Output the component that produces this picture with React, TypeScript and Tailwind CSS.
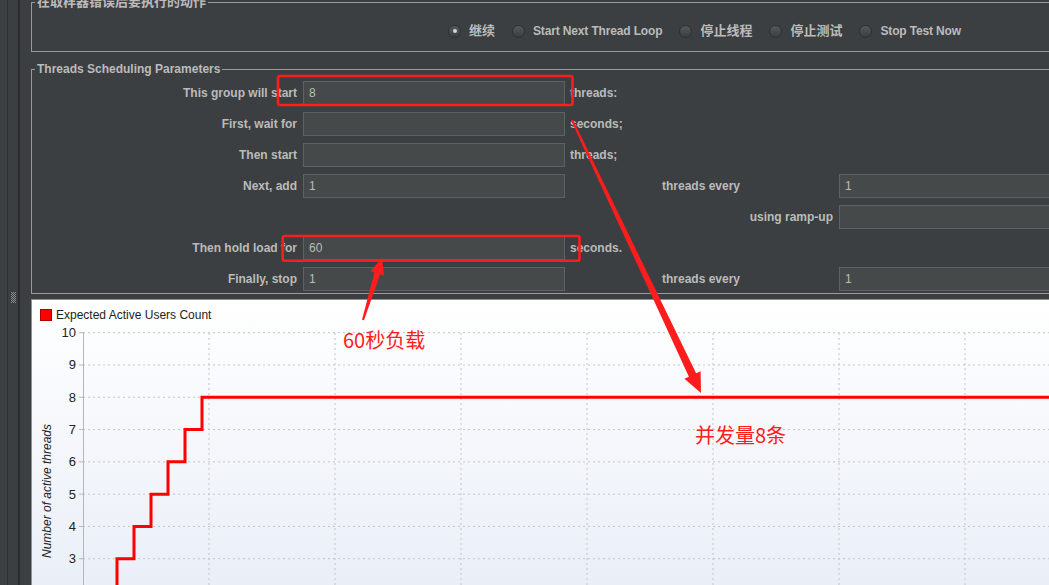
import React from 'react';

// JMeter stepping thread group panel (Darcula look) with red annotations on top

const labelCls = "font-['Liberation_Sans','Noto_Sans_CJK_SC',sans-serif] text-[12px] font-bold text-[#bbbbbb] whitespace-nowrap";

function Field({ value, width }: { value?: string; width: string }) {
    return (
        <div
            className={`${width} h-[24px] shrink-0 border border-[#5e6162] bg-[#45494a] pl-[5px] flex items-center text-[12px] text-[#bbbbbb] font-['Liberation_Sans',sans-serif]`}
        >
            {value}
        </div>
    );
}

function Radio({ label, checked, cjk }: { label: string; checked?: boolean; cjk?: boolean }) {
    return (
        <div className="flex items-center gap-[8px]">
            <span className="w-[13px] h-[13px] rounded-full border border-[#2d2f31] bg-gradient-to-b from-[#56595b] to-[#3b3e40] flex items-center justify-center">
                {checked && <span className="w-[4px] h-[4px] rounded-full bg-[#d6d6d6]" />}
            </span>
            <span
                className={`font-['Liberation_Sans','Noto_Sans_CJK_SC',sans-serif] font-bold text-[#bbbbbb] whitespace-nowrap ${
                    cjk ? 'text-[13px]' : 'text-[12px] tracking-[-0.15px]'
                }`}
            >
                {label}
            </span>
        </div>
    );
}

interface Row {
    label?: string;
    value?: string;
    hasField: boolean;
    unit?: string;
    midLabel?: string;
    midRight?: boolean;
    right?: string;
    hasRight?: boolean;
}

const rows: Row[] = [
    { label: 'This group will start', value: '8', hasField: true, unit: 'threads:' },
    { label: 'First, wait for', hasField: true, unit: 'seconds;' },
    { label: 'Then start', hasField: true, unit: 'threads;' },
    { label: 'Next, add', value: '1', hasField: true, midLabel: 'threads every', hasRight: true, right: '1' },
    { hasField: false, midLabel: 'using ramp-up', midRight: true, hasRight: true },
    { label: 'Then hold load for', value: '60', hasField: true, unit: 'seconds.' },
    { label: 'Finally, stop', value: '1', hasField: true, midLabel: 'threads every', hasRight: true, right: '1' },
];

const yv = (v: number) => 332.7 + (10 - v) * 32.29;
const gridXs = [209, 335, 461, 587, 713, 839, 965];
const gridVals = [10, 9, 8, 7, 6, 5, 4, 3, 2];

function Chart() {
    const step = `M117,600 V${yv(3)} H134 V${yv(4)} H151 V${yv(5)} H168 V${yv(6)} H185 V${yv(7)} H202 V${yv(8)} H1060`;
    return (
        <div className="ml-[11px] mt-[5px] w-[1040px] h-[300px] shrink-0 border-l border-t border-[#8e9092] bg-gradient-to-b from-white to-[#e9eef7]">
            <div className="flex items-center pl-[8px] pt-[9px] h-[21px]">
                <span className="w-[12px] h-[12px] bg-[#ff0000] border border-[#b00000]" />
                <span className="ml-[4px] text-[12px] text-[#222222] font-['Liberation_Sans',sans-serif] leading-[12px]">
                    Expected Active Users Count
                </span>
            </div>
            <svg width={1017} height={262} viewBox="32 323 1017 262" className="mt-[2px] block">
                {gridVals.map((v) => (
                    <g key={v}>
                        <line x1={83} x2={1049} y1={yv(v)} y2={yv(v)} stroke="#c4c4c8" strokeDasharray="2 3" />
                        <line x1={79} x2={83} y1={yv(v)} y2={yv(v)} stroke="#b8b8b8" />
                        {v > 2 && (
                            <text
                                x={76}
                                y={yv(v) + 4.5}
                                textAnchor="end"
                                fontSize={13}
                                fill="#222"
                                fontFamily="Liberation Sans, sans-serif"
                            >
                                {v}
                            </text>
                        )}
                    </g>
                ))}
                {gridXs.map((x) => (
                    <line key={x} x1={x} x2={x} y1={333} y2={600} stroke="#c4c4c8" strokeDasharray="2 3" />
                ))}
                <line x1={83.5} x2={83.5} y1={332} y2={600} stroke="#b4b6ba" />
                <text
                    x={0}
                    y={0}
                    transform="translate(51 491) rotate(-90)"
                    textAnchor="middle"
                    fontSize={12}
                    fontStyle="italic"
                    fill="#222"
                    fontFamily="Liberation Sans, sans-serif"
                >
                    Number of active threads
                </text>
                <path d={step} fill="none" stroke="#ff0000" strokeWidth={3} />
            </svg>
        </div>
    );
}

function Annotations() {
    return (
        <>
            <svg className="absolute inset-0 pointer-events-none" width={1049} height={585} viewBox="0 0 1049 585">
                <rect x={278} y={76} width={294.5} height={29} rx={2} fill="none" stroke="#ff1c1c" strokeWidth={2.6} />
                <rect x={282.7} y={236} width={296.8} height={24.7} rx={2} fill="none" stroke="#ff1c1c" strokeWidth={2.6} />
                {/* arrow to the 8-thread plateau */}
                <polygon
                    points="571.1,120.4 688.9,376.7 684.4,378.8 701,393 700.6,371.2 696.1,373.3 572.9,119.6"
                    fill="#ff1c1c"
                />
                {/* arrow to the hold field */}
                <polygon
                    points="362.0,319.7 374.4,272.4 370.6,271.2 382,258 384,275.4 380.2,274.2 364.0,320.3"
                    fill="#ff1c1c"
                />
            </svg>
            <span className="absolute left-[343px] top-[327px] text-[20px] leading-[26px] text-[#ff1c1c] font-['Noto_Sans_CJK_SC',sans-serif] pointer-events-none">
                60秒负载
            </span>
            <span className="absolute left-[695px] top-[422px] text-[20px] leading-[26px] text-[#ff1c1c] font-['Noto_Sans_CJK_SC',sans-serif] pointer-events-none">
                并发量8条
            </span>
        </>
    );
}

export default function App() {
    return (
        <div className="relative w-[1049px] h-[585px] overflow-hidden bg-[#3c3f41] flex">
            {/* left splitter strip */}
            <div className="flex w-[20px] shrink-0 h-full">
                <div className="w-[7px] bg-[#3d4042]" />
                <div className="w-px bg-[#2e3032]" />
                <div className="w-[10px] bg-[#3c3f41] flex items-center justify-center pt-[10px]">
                    <svg width={5} height={11} viewBox="0 0 5 11">
                        {[0, 2, 4, 6, 8, 10].map((y) => (
                            <g key={y} fill="#8a8d90">
                                <rect x={0} y={y} width={1} height={1} />
                                <rect x={2} y={y} width={1} height={1} />
                                <rect x={4} y={y} width={1} height={1} />
                                <rect x={1} y={y + 1} width={1} height={1} />
                                <rect x={3} y={y + 1} width={1} height={1} />
                            </g>
                        ))}
                    </svg>
                </div>
                <div className="w-[2px] bg-[#2b2d2f]" />
            </div>

            {/* main area */}
            <div className="flex-1 flex flex-col overflow-hidden">
                <fieldset className="ml-[11px] mt-[-6px] w-[1100px] shrink-0 border border-[#9a9a9a] pt-[13px] pb-[12px]">
                    <legend className={`ml-[3px] px-[2px] leading-[16px] ${labelCls} text-[13px]`}>在取样器错误后要执行的动作</legend>
                    <div className="flex items-center h-[16px] gap-[17px] pl-[416px]">
                        <Radio label="继续" checked cjk />
                        <Radio label="Start Next Thread Loop" />
                        <Radio label="停止线程" cjk />
                        <Radio label="停止测试" cjk />
                        <Radio label="Stop Test Now" />
                    </div>
                </fieldset>

                <fieldset className="ml-[11px] mt-[9px] w-[1100px] shrink-0 border border-[#9a9a9a] pt-[4px] pb-[2px]">
                    <legend className={`ml-[3px] px-[2px] leading-[16px] ${labelCls}`}>Threads Scheduling Parameters</legend>
                    <div className="flex flex-col gap-[7px]">
                        {rows.map((r, i) => (
                            <div key={i} className="flex items-center h-[24px]">
                                <div className={`w-[265px] text-right ${labelCls}`}>{r.label}</div>
                                <div className="ml-[6px] w-[262px]">
                                    {r.hasField && <Field value={r.value} width="w-[262px]" />}
                                </div>
                                <div className={`ml-[5px] w-[269px] flex ${labelCls}`}>
                                    {r.unit && <span>{r.unit}</span>}
                                    {r.midLabel && !r.midRight && <span className="ml-[92px]">{r.midLabel}</span>}
                                    {r.midLabel && r.midRight && <span className="ml-auto mr-[6px]">{r.midLabel}</span>}
                                </div>
                                {r.hasRight && <Field value={r.right} width="w-[260px]" />}
                            </div>
                        ))}
                    </div>
                </fieldset>

                <Chart />
            </div>

            <Annotations />
        </div>
    );
}
